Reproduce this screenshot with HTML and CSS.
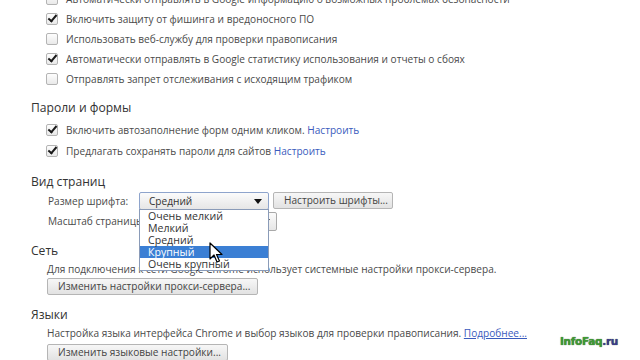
FILE: index.html
```html
<!DOCTYPE html>
<html lang="ru">
<head>
    <meta charset="UTF-8">
    <title>Настройки</title>
    <link rel="stylesheet" href="styles.css">
</head>
<body>
    <div class="page">
        <!-- личные данные, конец блока -->
        <div class="section first">
            <div class="row"><span class="check"></span>Автоматически отправлять в Google информацию о возможных проблемах безопасности</div>
            <div class="row"><span class="check on"></span>Включить защиту от фишинга и вредоносного ПО</div>
            <div class="row"><span class="check"></span>Использовать веб-службу для проверки правописания</div>
            <div class="row"><span class="check on"></span>Автоматически отправлять в Google статистику использования и отчеты о сбоях</div>
            <div class="row"><span class="check"></span>Отправлять запрет отслеживания с исходящим трафиком</div>
        </div>

        <div class="section pass">
            <h3>Пароли и формы</h3>
            <div class="row"><span class="check on"></span>Включить автозаполнение форм одним кликом.&nbsp;<a href="#">Настроить</a></div>
            <div class="row"><span class="check on"></span>Предлагать сохранять пароли для сайтов&nbsp;<a href="#">Настроить</a></div>
        </div>

        <div class="section view">
            <h3>Вид страниц</h3>
            <div class="field">
                <span class="label">Размер шрифта:</span>
                <div class="select-wrap">
                    <div class="select focus">Средний<span class="arrow"></span></div>
                    <ul class="options">
                        <li>Очень мелкий</li>
                        <li>Мелкий</li>
                        <li>Средний</li>
                        <li class="hl">Крупный</li>
                        <li>Очень крупный</li>
                    </ul>
                    <svg class="cursor" width="14" height="22" viewBox="0 0 14 22">
                        <path d="M1 1 L1 17 L5 13 L8 20 L10.5 19 L7.5 12.5 L13 12.5 Z" fill="#fff" stroke="#000" stroke-width="1.2" stroke-linejoin="round"/>
                    </svg>
                </div>
                <button class="btn">Настроить шрифты...</button>
            </div>
            <div class="field zoom">
                <span class="label">Масштаб страницы:</span>
                <div class="select wide">100%<span class="arrow"></span></div>
            </div>
        </div>

        <div class="section net">
            <h3>Сеть</h3>
            <p class="desc">Для подключения к сети Google Chrome использует системные настройки прокси-сервера.</p>
            <button class="btn wide-btn">Изменить настройки прокси-сервера...</button>
        </div>

        <div class="section lang">
            <h3>Языки</h3>
            <p class="desc">Настройка языка интерфейса Chrome и выбор языков для проверки правописания. <a class="u" href="#">Подробнее...</a></p>
            <button class="btn lang-btn">Изменить языковые настройки...</button>
        </div>
    </div>

    <div class="logo"><span class="g">InfoFaq</span><span class="b">.ru</span></div>
</body>
</html>
```

FILE: styles.css
```css
html, body {
    margin: 0;
    padding: 0;
    background: #fff;
    overflow: hidden;
}
body {
    width: 640px;
    height: 360px;
    font-family: "Open Sans", "Noto Sans", sans-serif;
    font-size: 10.1px;
    color: #4a4a4a;
    white-space: nowrap;
}
.page {
    padding-left: 31px;
}
h3 {
    margin: 0;
    height: 18px;
    line-height: 18px;
    font-size: 12.1px;
    font-weight: normal;
    color: #333;
}
a {
    color: #3a5bbd;
    text-decoration: none;
}
a.u {
    text-decoration: underline;
}

.section.first {
    margin-top: -11px;
}
.section.pass {
    margin-top: 10px;
}
.section.pass h3 {
    margin-bottom: 2px;
}
.section.pass .row {
    height: 21px;
}
.section.view {
    margin-top: 12px;
}
.section.net {
    margin-top: 11px;
}
.section.lang {
    margin-top: 11px;
}

.row {
    display: flex;
    align-items: center;
    height: 20px;
    padding-left: 15px;
}
.check {
    position: relative;
    box-sizing: border-box;
    width: 12px;
    height: 12px;
    margin-right: 8px;
    border: 1px solid #b4b4b4;
    border-radius: 2px;
    background: linear-gradient(#fdfdfd, #e9e9e9);
    flex: none;
}
.check.on::after {
    content: "";
    position: absolute;
    left: 3px;
    top: -1px;
    width: 3px;
    height: 7px;
    border: solid #1a1a1a;
    border-width: 0 2.5px 2.5px 0;
    transform: rotate(40deg);
}

.field {
    display: flex;
    align-items: center;
    padding-left: 17px;
    height: 19px;
}
.field.zoom {
    height: 20px;
    margin-top: 1px;
}
.label {
    width: 91px;
    flex: none;
}
.select-wrap {
    position: relative;
}
.select {
    position: relative;
    box-sizing: border-box;
    width: 130px;
    height: 18px;
    line-height: 16px;
    padding-left: 9px;
    border: 1px solid #a9a9a9;
    border-radius: 2px;
    background: linear-gradient(#fbfbfb, #e6e6e6);
    color: #333;
}
.select.focus {
    border-color: #8ea4cc;
}
.select.wide {
    width: 138px;
    height: 19px;
}
.arrow {
    position: absolute;
    right: 6px;
    top: 6px;
    border-left: 4px solid transparent;
    border-right: 4px solid transparent;
    border-top: 5px solid #111;
}
.options {
    position: absolute;
    z-index: 2;
    left: 0;
    top: 17px;
    box-sizing: border-box;
    width: 130px;
    margin: 0;
    padding: 0;
    list-style: none;
    background: #fff;
    border: 1px solid #8a9bb8;
}
.options li {
    height: 12px;
    line-height: 12px;
    padding-left: 8px;
    font-size: 10.6px;
    color: #333;
}
.options li.hl {
    background: #3b7fd4;
    color: #fff;
}
.cursor {
    position: absolute;
    z-index: 3;
    left: 70px;
    top: 50px;
}
.btn {
    box-sizing: border-box;
    height: 17px;
    padding: 0 10px;
    border: 1px solid #b5b5b5;
    border-radius: 2px;
    background: linear-gradient(#f7f7f7, #e2e2e2);
    font-family: inherit;
    font-size: 10.1px;
    line-height: 15px;
    color: #444;
    white-space: nowrap;
}
.field .btn {
    margin-left: 4px;
    width: 120px;
}
.desc {
    margin: 0;
    height: 18px;
    line-height: 18px;
    padding-left: 16px;
}
.net .btn, .lang .btn {
    display: block;
    margin-left: 16px;
    width: 211px;
}
.lang .btn {
    margin-top: 2px;
    width: 181px;
}

.logo {
    position: absolute;
    left: 560px;
    top: 335px;
    font-family: "DejaVu Sans", sans-serif;
    font-weight: bold;
    font-size: 10.5px;
    letter-spacing: -0.3px;
    text-shadow: 0 0 1px #1d3d12;
}
.logo .g {
    color: #3f9a35;
}
.logo .b {
    color: #3b3a8e;
}
```
